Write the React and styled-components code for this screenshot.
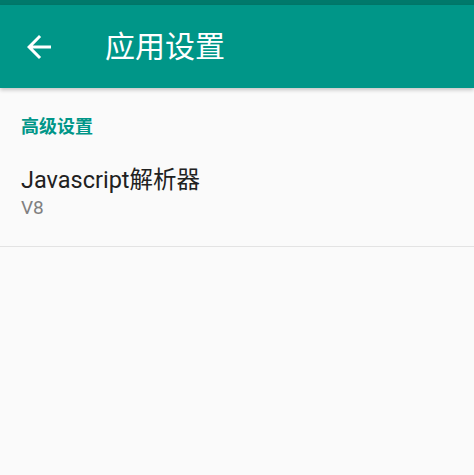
import React from 'react'
import styled, { createGlobalStyle } from 'styled-components'

const GlobalStyle = createGlobalStyle`
  html, body {
    margin: 0;
    padding: 0;
    background: #fafafa;
    font-family: Roboto, "Noto Sans CJK SC", sans-serif;
  }
`

const Screen = styled.div`
  width: 474px;
  height: 475px;
  background: #fafafa;
  overflow: hidden;
`

const StatusBar = styled.div`
  height: 5px;
  background: #00796b;
`

const AppBar = styled.header`
  height: 83px;
  background: #009688;
  display: flex;
  align-items: center;
  padding-left: 21px;
  box-shadow: 0 2px 4px rgba(0, 0, 0, 0.22);
  position: relative;
  color: #fff;
`

const BackButton = styled.button`
  width: 36px;
  height: 36px;
  padding: 0;
  border: 0;
  background: none;
  display: flex;
  color: #fff;
  cursor: pointer;
  svg {
    width: 36px;
    height: 36px;
  }
`

const Title = styled.h1`
  margin: 0 0 0 48px;
  font-size: 30px;
  font-weight: 400;
  line-height: 36px;
`

const SectionHeader = styled.div`
  margin-top: 28px;
  padding-left: 21px;
  font-size: 18px;
  line-height: 22px;
  font-weight: 700;
  color: #009688;
`

const Item = styled.div`
  padding: 27px 21px 27px;
  border-bottom: 1px solid #e3e3e3;
`

const ItemTitle = styled.div`
  font-size: 23.5px;
  line-height: 30px;
  color: #212121;
`

const ItemSummary = styled.div`
  margin-top: 2px;
  font-size: 19px;
  line-height: 22px;
  color: #808080;
`

export default function App() {
  return (
    <Screen>
      <GlobalStyle />
      <StatusBar />
      <AppBar>
        <BackButton aria-label="返回">
          <svg viewBox="0 0 24 24" fill="currentColor">
            <path d="M20 11H7.83l5.59-5.59L12 4l-8 8 8 8 1.41-1.41L7.83 13H20v-2z" />
          </svg>
        </BackButton>
        <Title>应用设置</Title>
      </AppBar>
      <SectionHeader>高级设置</SectionHeader>
      <Item>
        <ItemTitle>Javascript解析器</ItemTitle>
        <ItemSummary>V8</ItemSummary>
      </Item>
    </Screen>
  )
}
